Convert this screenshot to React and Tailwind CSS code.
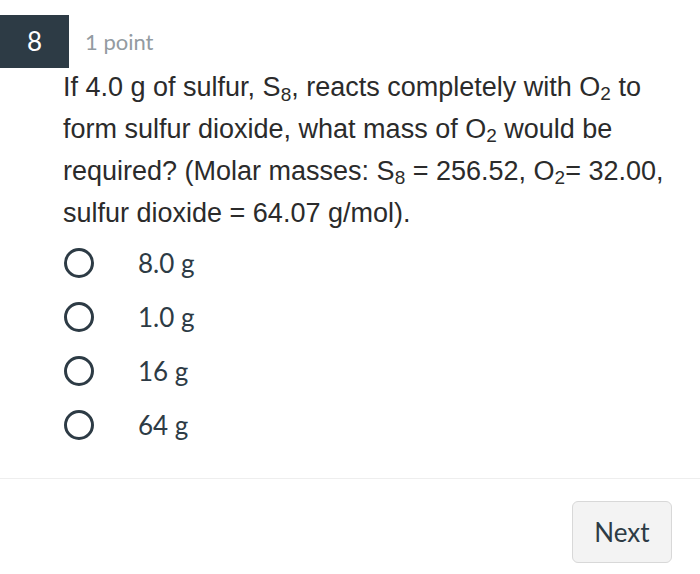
import React from 'react';

const options = ['8.0 g', '1.0 g', '16 g', '64 g'];

const Sub = ({ children, low }) => (
  <sub className={`text-[19px] ${low ? 'relative top-[4px]' : ''}`}>{children}</sub>
);

export default function App() {
  return (
    <div className="w-[700px] h-[574px] bg-white text-[#2d3b45] overflow-hidden">
      {/* header */}
      <div className="flex items-center pt-[15px]">
        <div className="w-[69px] h-[53px] bg-[#2d3b45] flex items-center justify-center text-white text-[26px] font-['Lato',sans-serif]">
          8
        </div>
        <div className="ml-[16px] text-[22px] text-[#939ba1] font-['Lato',sans-serif]">1 point</div>
      </div>

      {/* question */}
      <p className="pl-[63px] pr-[10px] -mt-[2px] text-[27px] leading-[42px] text-[#2b2b2b] font-['Liberation_Sans',Arial,sans-serif] tracking-[0px] whitespace-nowrap">
        If 4.0 g of sulfur, S<Sub>8</Sub>, reacts completely with O<Sub low>2</Sub> to
        <br />
        form sulfur dioxide, what mass of O<Sub low>2</Sub> would be
        <br />
        required? (Molar masses: S<Sub low>8</Sub> = 256.52, O<Sub low>2</Sub>= 32.00,
        <br />
        sulfur dioxide = 64.07 g/mol).
      </p>

      {/* options */}
      <div className="flex flex-col mt-[2px] pl-[64px] font-['Lato',sans-serif] text-[26px] text-[#2d3b45]">
        {options.map((o) => (
          <label key={o} className="flex items-center h-[54px]">
            <span className="w-[30px] h-[30px] rounded-full border-[3px] border-[#2d3b45]" />
            <span className="ml-[44px]">{o}</span>
          </label>
        ))}
      </div>

      {/* footer */}
      <div className="mt-[26px] border-t border-[#eeeeee] flex justify-end pr-[28px] pt-[22px]">
        <button className="w-[100px] h-[62px] rounded-[6px] border border-[#d8d8d8] bg-[#f3f3f3] text-[26px] text-[#2d3b45] font-['Lato',sans-serif]">
          Next
        </button>
      </div>
    </div>
  );
}
